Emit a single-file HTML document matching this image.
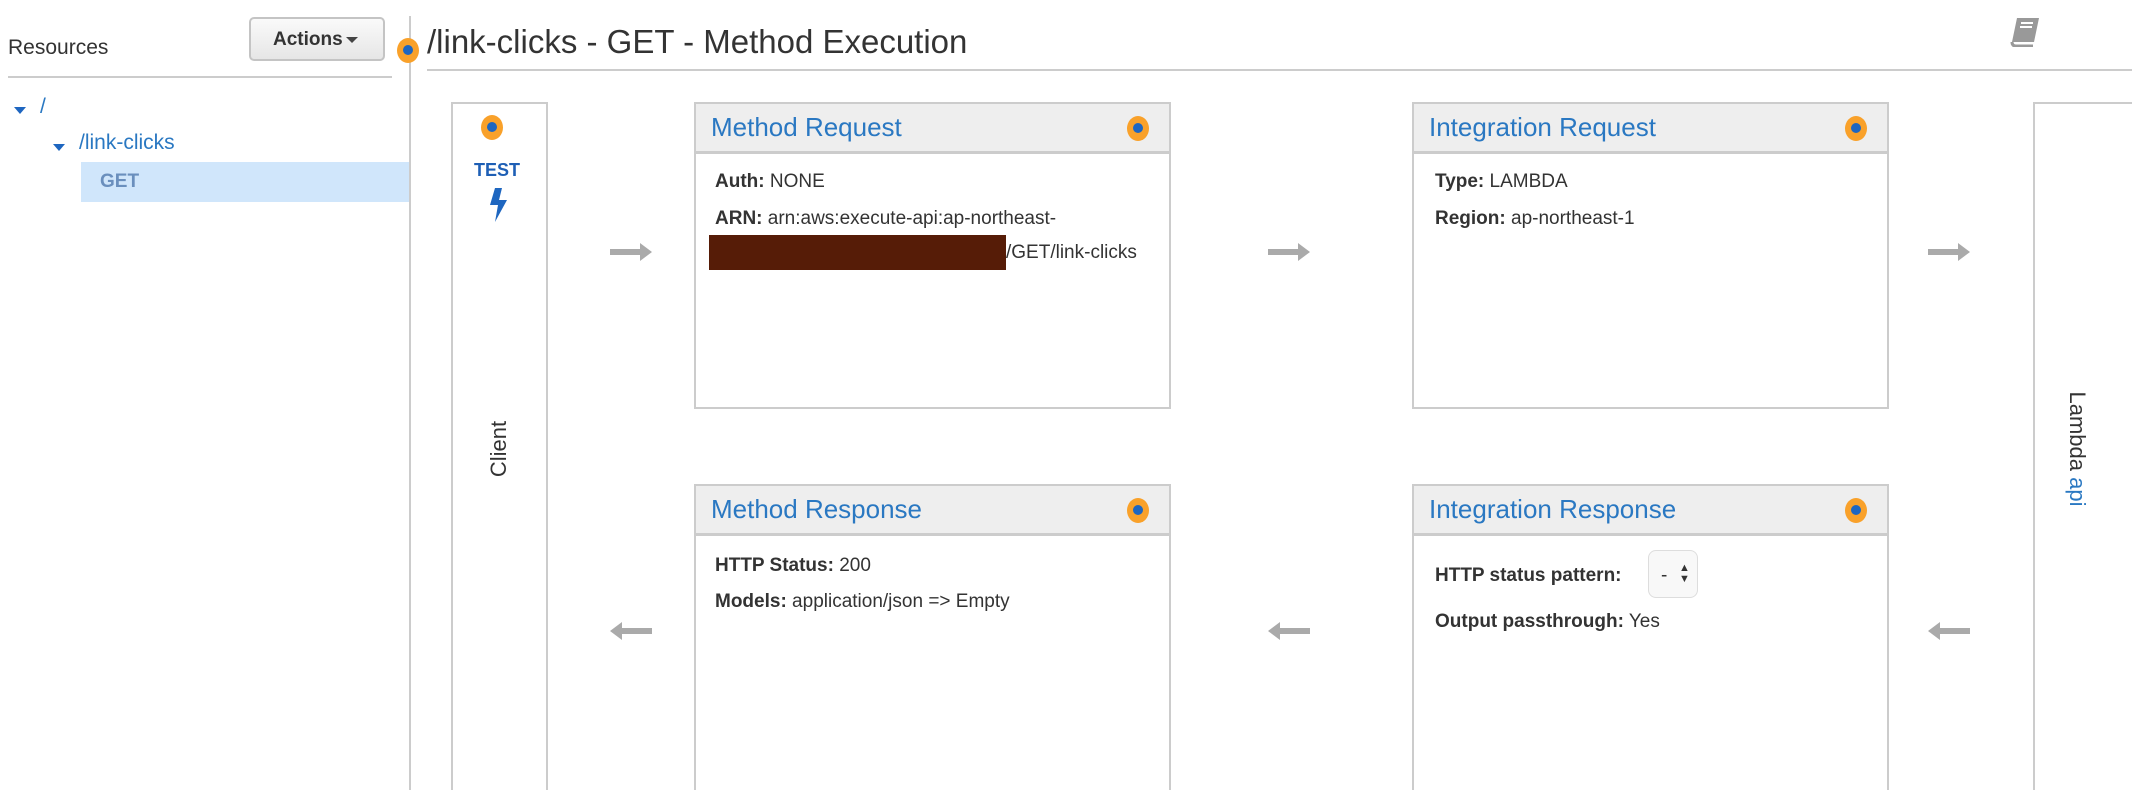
<!DOCTYPE html>
<html style="overflow:hidden;width:2132px;height:790px"><head><meta charset="utf-8"><style>
*{margin:0;padding:0;box-sizing:border-box}
body{width:2132px;height:790px;overflow:hidden;background:#fff;font-family:"Liberation Sans",Arial,sans-serif;color:#333;position:relative}
.a{position:absolute}
.dot{position:absolute;width:22px;height:25px;border-radius:50%;background:#f9a12a;}
.dot::after{content:"";position:absolute;left:6px;top:7px;width:10px;height:10px;border-radius:50%;background:#1e66c0}
.box{position:absolute;border:2px solid #ccc;background:#fff}
.hd{position:absolute;left:0;right:0;top:0;height:50px;background:#eee;border-bottom:3px solid #ccc}
.hd span{position:absolute;left:15px;top:8px;font-size:26px;color:#2a78c2}
.hd .dot{left:auto;right:20px;top:12px}
.ln{position:absolute;font-size:19px;white-space:nowrap}
.ln b{color:#333}
.arr{position:absolute;width:42px;height:18px}
</style></head><body>
<div class="a" style="left:8px;top:36px;font-size:21px;color:#333">Resources</div>
<div class="a" style="left:249px;top:17px;width:136px;height:44px;border:2px solid #c4c4c4;border-radius:5px;background:linear-gradient(#fafafa,#e6e6e6);font-weight:bold;font-size:19px;padding:10px 0 0 22px">Actions<span style="display:inline-block;width:0;height:0;border-left:6px solid transparent;border-right:6px solid transparent;border-top:6px solid #444;margin-left:3px;vertical-align:middle"></span></div>
<div class="a" style="left:8px;top:76px;width:384px;height:2px;background:#ccc"></div>
<div class="a" style="left:409px;top:16px;width:2px;height:774px;background:#ccc"></div>
<div class="dot" style="left:397px;top:38px"></div>
<div class="a" style="left:14px;top:107px;border-left:6px solid transparent;border-right:6px solid transparent;border-top:7px solid #1e66c0"></div>
<div class="a" style="left:40px;top:95px;font-size:21px;color:#2a78c2">/</div>
<div class="a" style="left:53px;top:144px;border-left:6px solid transparent;border-right:6px solid transparent;border-top:7px solid #1e66c0"></div>
<div class="a" style="left:79px;top:131px;font-size:21px;color:#2a78c2">/link-clicks</div>
<div class="a" style="left:81px;top:162px;width:328px;height:40px;background:#d0e6fb"></div>
<div class="a" style="left:100px;top:171px;font-size:19px;font-weight:bold;color:#6a8fbd">GET</div>

<div class="a" style="left:427px;top:23px;font-size:33px;color:#333">/link-clicks - GET - Method Execution</div>
<div class="a" style="left:427px;top:69px;width:1705px;height:2px;background:#ccc"></div>
<svg class="a" style="left:2009px;top:17px" width="32" height="30" viewBox="0 0 32 30"><path d="M8 1h22l-5 24H3z" fill="#999"/><path d="M3 25q0 4 4 4h17" stroke="#999" stroke-width="3" fill="none"/><rect x="12" y="5" width="12" height="2" fill="#fff"/><rect x="11" y="9" width="12" height="2" fill="#fff"/></svg>

<div class="box" style="left:451px;top:102px;width:97px;height:700px"></div>
<div class="dot" style="left:481px;top:115px"></div>
<div class="a" style="left:474px;top:160px;font-size:18px;font-weight:bold;color:#1e5fb5">TEST</div>
<svg class="a" style="left:489px;top:188px" width="20" height="34" viewBox="0 0 20 34"><path d="M6 0h7l-3 12h8L6 34l3-17H1z" fill="#1e66c0"/></svg>
<div class="a" style="left:499px;top:449px;font-size:22px;transform:translate(-50%,-50%) rotate(-90deg);white-space:nowrap">Client</div>

<div class="box" style="left:2033px;top:102px;width:110px;height:700px"></div>
<div class="a" style="left:2077px;top:449px;font-size:22px;transform:translate(-50%,-50%) rotate(90deg);white-space:nowrap">Lambda <span style="color:#2a78c2">api</span></div>

<div class="box" style="left:694px;top:102px;width:477px;height:307px"><div class="hd"><span>Method Request</span><div class="dot"></div></div>
<div class="ln" style="left:19px;top:67px"><b>Auth:</b> NONE</div>
<div class="ln" style="left:19px;top:104px"><b>ARN:</b> arn:aws:execute-api:ap-northeast-</div>
<div class="a" style="left:13px;top:131px;width:297px;height:35px;background:#561c07"></div>
<div class="ln" style="left:310px;top:138px">/GET/link-clicks</div>
</div>
<div class="box" style="left:1412px;top:102px;width:477px;height:307px"><div class="hd"><span>Integration Request</span><div class="dot"></div></div>
<div class="ln" style="left:21px;top:67px"><b>Type:</b> LAMBDA</div>
<div class="ln" style="left:21px;top:104px"><b>Region:</b> ap-northeast-1</div>
</div>
<div class="box" style="left:694px;top:484px;width:477px;height:320px"><div class="hd"><span>Method Response</span><div class="dot"></div></div>
<div class="ln" style="left:19px;top:69px"><b>HTTP Status:</b> 200</div>
<div class="ln" style="left:19px;top:105px"><b>Models:</b> application/json =&gt; Empty</div>
</div>
<div class="box" style="left:1412px;top:484px;width:477px;height:320px"><div class="hd"><span>Integration Response</span><div class="dot"></div></div>
<div class="ln" style="left:21px;top:79px"><b>HTTP status pattern:</b></div>
<div class="a" style="left:234px;top:64px;width:50px;height:48px;border:1px solid #ddd;border-radius:8px;background:#f8f8f8;font-size:19px;padding:14px 0 0 12px">- <span style="font-size:11px;position:absolute;left:30px;top:12px;line-height:11px">▲<br>▼</span></div>
<div class="ln" style="left:21px;top:125px"><b>Output passthrough:</b> Yes</div>
</div>

<svg class="arr" style="left:610px;top:243px" viewBox="0 0 42 18"><path d="M0 6h30V0l12 9-12 9v-6H0z" fill="#aaa"/></svg>
<svg class="arr" style="left:1268px;top:243px" viewBox="0 0 42 18"><path d="M0 6h30V0l12 9-12 9v-6H0z" fill="#aaa"/></svg>
<svg class="arr" style="left:1928px;top:243px" viewBox="0 0 42 18"><path d="M0 6h30V0l12 9-12 9v-6H0z" fill="#aaa"/></svg>
<svg class="arr" style="left:610px;top:622px" viewBox="0 0 42 18"><path d="M42 6H12V0L0 9l12 9v-6h30z" fill="#aaa"/></svg>
<svg class="arr" style="left:1268px;top:622px" viewBox="0 0 42 18"><path d="M42 6H12V0L0 9l12 9v-6h30z" fill="#aaa"/></svg>
<svg class="arr" style="left:1928px;top:622px" viewBox="0 0 42 18"><path d="M42 6H12V0L0 9l12 9v-6h30z" fill="#aaa"/></svg>
</body></html>
